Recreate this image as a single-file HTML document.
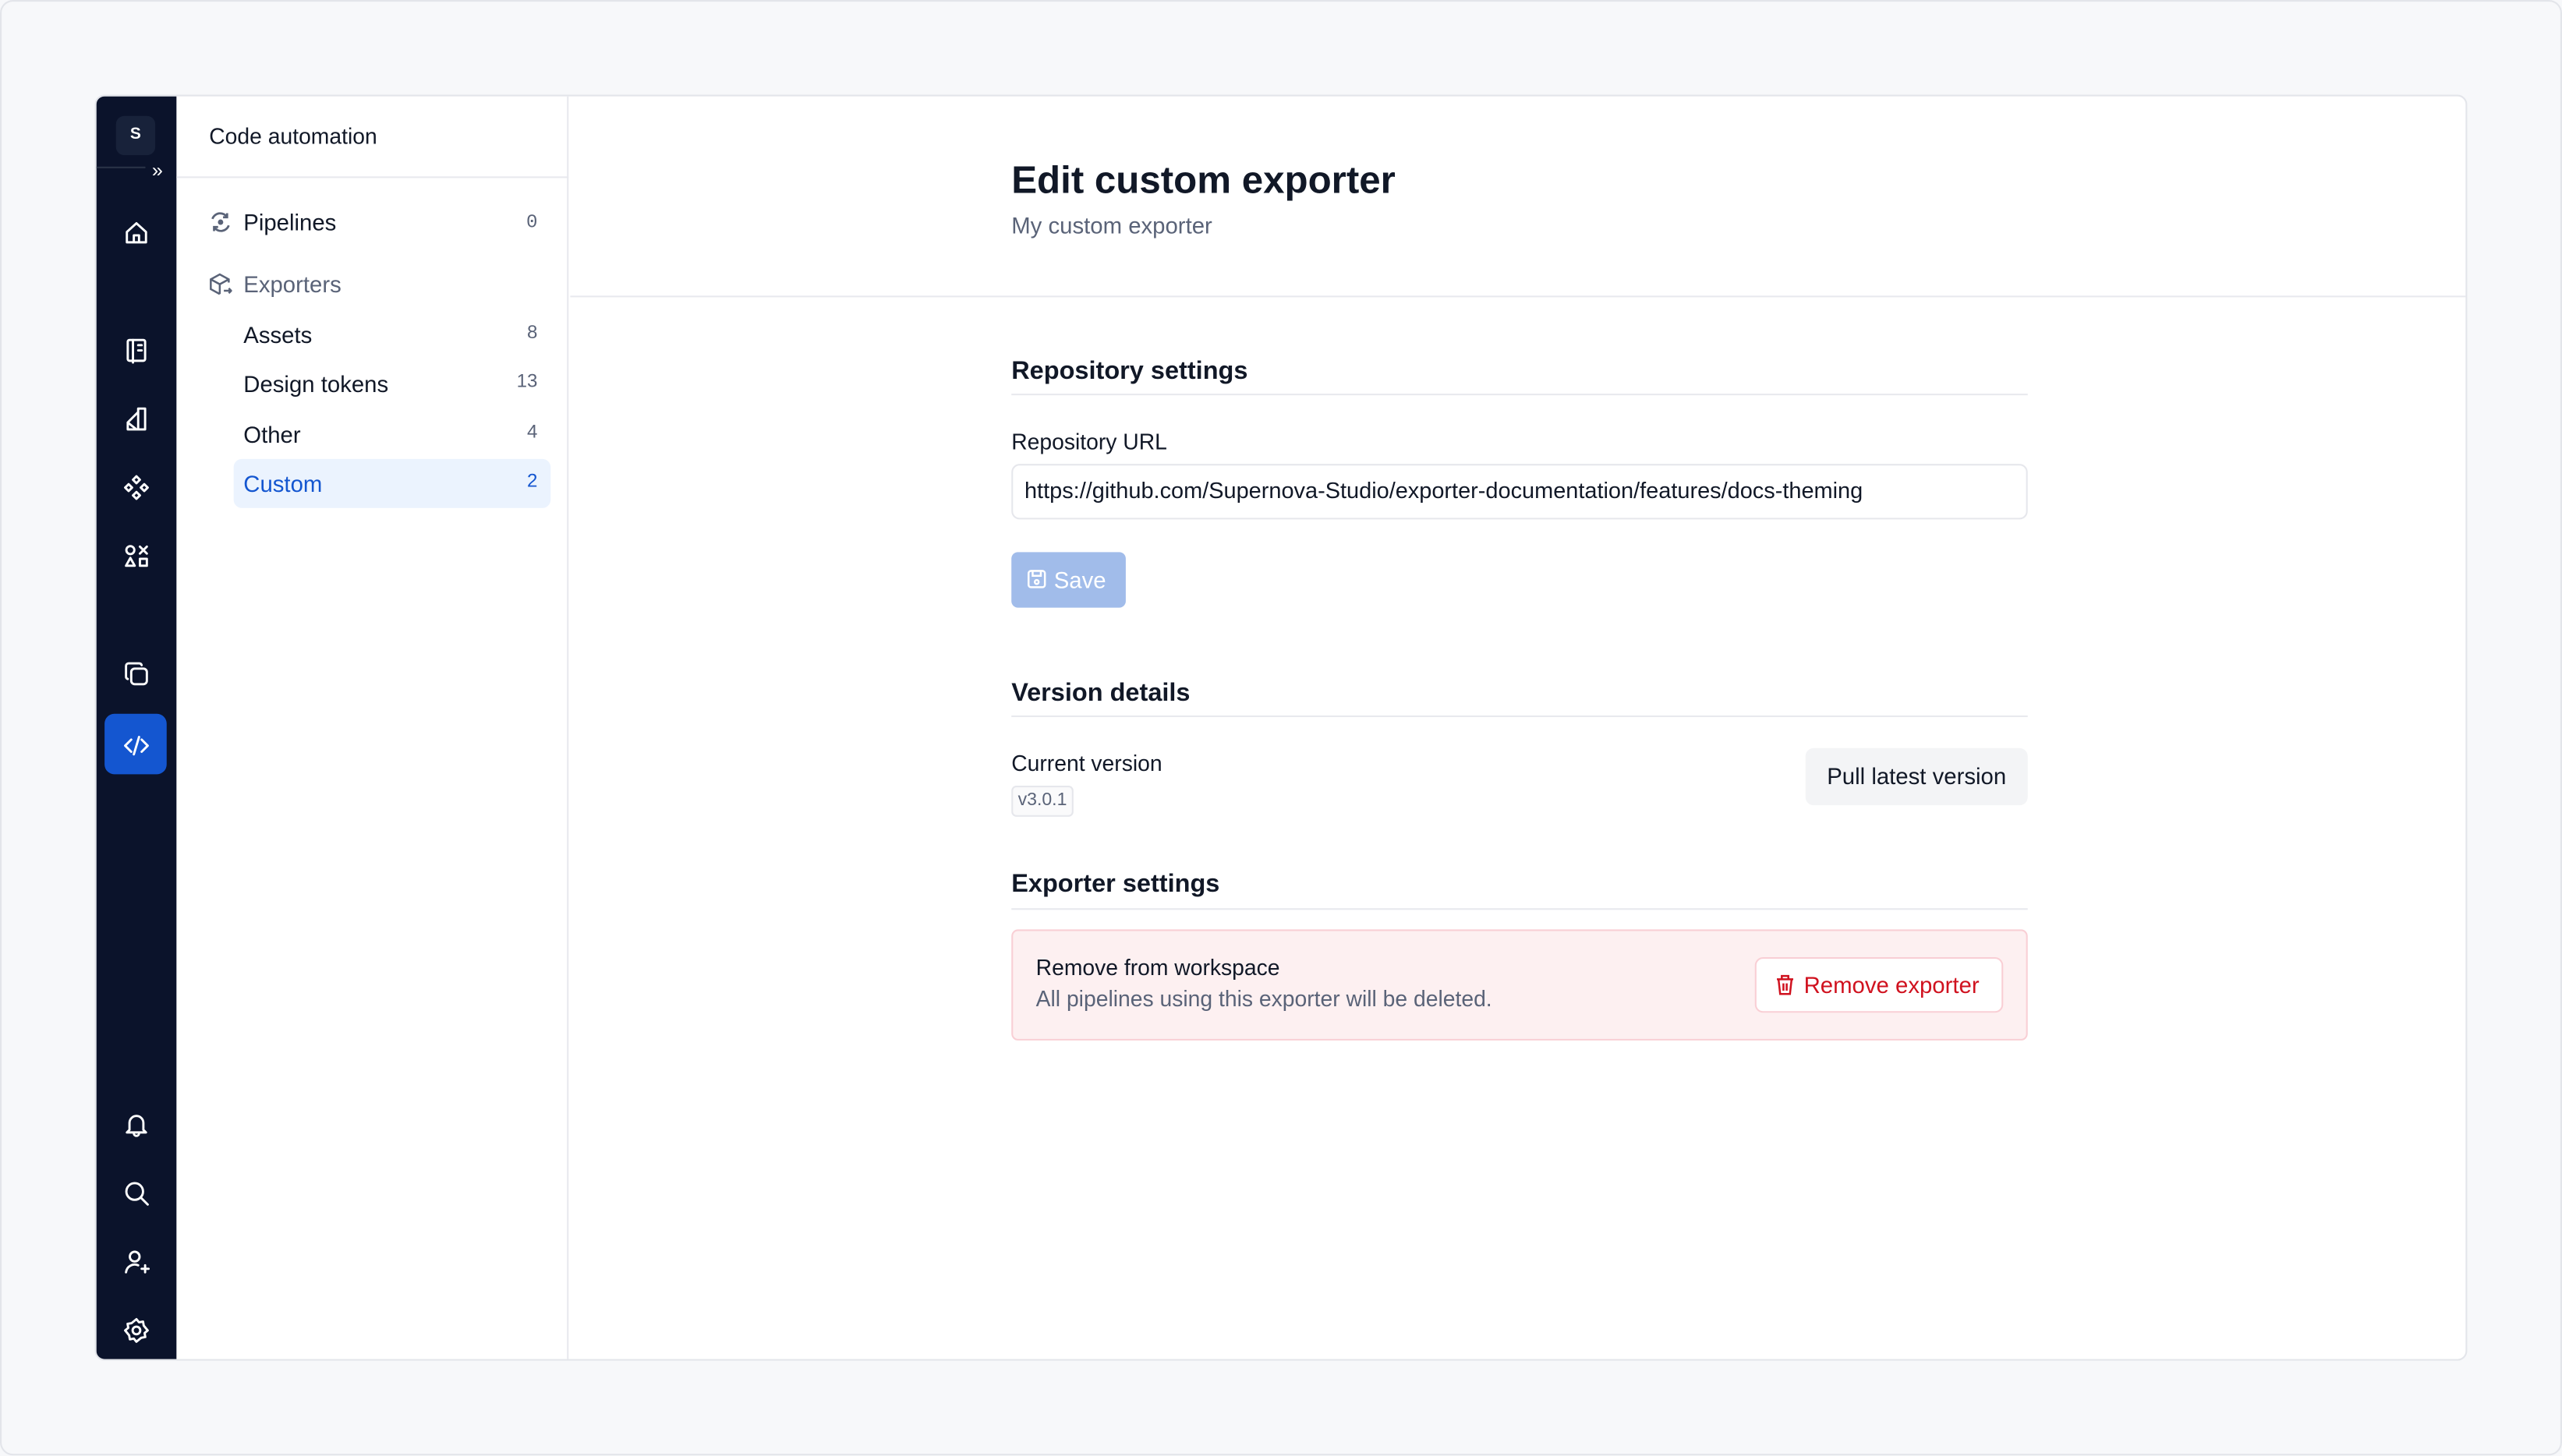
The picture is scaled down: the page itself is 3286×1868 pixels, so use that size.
<!DOCTYPE html>
<html><head><meta charset="utf-8"><style>
*{box-sizing:border-box;margin:0;padding:0}
html,body{width:3286px;height:1868px;overflow:hidden;background:#f7f8fa}
#s{position:absolute;left:0;top:0;width:1568px;height:891px;transform:scale(2.09566);transform-origin:0 0;font-family:"Liberation Sans",sans-serif;color:#111827;background:#f7f8fa;border:1px solid #e3e5ea;border-radius:8px}
.a{position:absolute}
#app{left:57px;top:57px;width:1452px;height:775px;background:#fff;border:1px solid #e3e5ea;border-radius:6px;overflow:hidden}
#nav{left:0;top:0;width:49px;height:775px;background:#0b132b}
#side{left:49px;top:0;width:240px;height:775px;border-right:1px solid #e8e9ee}
.ic{position:absolute;left:16px;width:17px;height:17px}
.ic svg{width:17px;height:17px;fill:none;stroke:#fff;stroke-width:1.3;stroke-linecap:round;stroke-linejoin:round}
.it{position:absolute;left:41px;font-size:14px;color:#111827}
.ct{position:absolute;right:18px;font-size:11.5px;color:#5a6378}
h2{position:absolute;font-size:15.5px;font-weight:bold;color:#111827}
.hr{position:absolute;left:559px;width:622px;height:1px;background:#e8e9ee}
</style></head><body><div id="s">
<div id="app" class="a">
 <div id="nav" class="a">
  <div class="a" style="left:12px;top:12px;width:24px;height:24px;border-radius:5px;background:#18223a;color:#fff;font-size:10px;font-weight:bold;text-align:center;line-height:24px">S</div>
  <div class="a" style="left:0;top:43px;width:30px;height:1px;background:#2a3347"></div>
  <div class="a" style="left:34px;top:39px;color:#fff;font-size:12px;line-height:12px">»</div>
  <div class="ic" style="top:75px"><svg viewBox="0 0 16 16"><path d="M2.5 7.5L8 2.5l5.5 5v6h-11z M6.5 13.5v-4h3v4"/></svg></div>
  <div class="ic" style="top:147px"><svg viewBox="0 0 16 16"><rect x="3" y="2" width="10" height="12" rx="1"/><path d="M6 2v13M9 5h2M9 8h2"/></svg></div>
  <div class="ic" style="top:189px"><svg viewBox="0 0 16 16"><path d="M9 2h4v12H3v-4l6-6z M9 4v10M3 10l5 4"/></svg></div>
  <div class="ic" style="top:231px"><svg viewBox="0 0 16 16"><path d="M8 1.5l2 2-2 2-2-2zM8 10.5l2 2-2 2-2-2zM3.5 6l2 2-2 2-2-2zM12.5 6l2 2-2 2-2-2z"/></svg></div>
  <div class="ic" style="top:273px"><svg viewBox="0 0 16 16"><circle cx="4.5" cy="4.5" r="2.3"/><path d="M10 2.5l4 4M14 2.5l-4 4M4.5 9l2.5 4.5H2zM10 9.5h4v4h-4z"/></svg></div>
  <div class="ic" style="top:345px"><svg viewBox="0 0 16 16"><rect x="5" y="5" width="9" height="9" rx="2"/><path d="M11 3a1.5 1.5 0 0 0-1.5-1H3.5A1.5 1.5 0 0 0 2 3.5v6A1.5 1.5 0 0 0 3 11"/></svg></div>
  <div class="a" style="left:5px;top:378px;width:38px;height:37px;border-radius:6px;background:#1456d0"></div>
  <div class="ic" style="top:389px"><svg viewBox="0 0 16 16"><path d="M5 4.5L1.5 8 5 11.5M11 4.5L14.5 8 11 11.5M9.5 3l-3 10"/></svg></div>
  <div class="ic" style="top:621px"><svg viewBox="0 0 16 16"><path d="M4 11V7a4 4 0 0 1 8 0v4l1.5 1.5h-11zM6.5 13a1.5 1.5 0 0 0 3 0"/></svg></div>
  <div class="ic" style="top:663px"><svg viewBox="0 0 16 16"><circle cx="7" cy="7" r="4.8"/><path d="M10.5 10.5l4 4"/></svg></div>
  <div class="ic" style="top:705px"><svg viewBox="0 0 16 16"><circle cx="7" cy="5" r="2.8"/><path d="M2 14a5 5 0 0 1 7-4M11 12h4M13 10v4"/></svg></div>
  <div class="ic" style="top:747px"><svg viewBox="0 0 16 16"><circle cx="8" cy="8" r="2.2"/><path d="M8 1.5l1.5 1.8 2.3-.4.4 2.3L14.5 8l-1.8 1.5.4 2.3-2.3.4L8 14.5l-1.5-1.8-2.3.4-.4-2.3L1.5 8l1.8-1.5-.4-2.3 2.3-.4z"/></svg></div>
 </div>
 <div id="side" class="a">
  <div class="a" style="left:20px;top:17px;font-size:13.5px">Code automation</div>
  <div class="a" style="left:0;top:49px;width:240px;height:1px;background:#e8e9ee"></div>
  <svg class="a" style="left:20px;top:70px;width:14px;height:14px;fill:none;stroke:#5a6378;stroke-width:1.3" viewBox="0 0 14 14"><path d="M2 5a5 5 0 0 1 9-1M12 9a5 5 0 0 1-9 1M11 1.5V4H8.5M3 12.5V10h2.5"/><circle cx="7" cy="7" r="1" fill="#5a6378"/></svg>
  <div class="it" style="top:69px">Pipelines</div><div class="ct" style="top:71px;font-family:'Liberation Mono',monospace">0</div>
  <svg class="a" style="left:20px;top:108px;width:14px;height:14px;fill:none;stroke:#5a6378;stroke-width:1.2" viewBox="0 0 14 14"><path d="M12 6V4L6.5 1 1 4v6l5.5 3M1 4l5.5 3L12 4M6.5 7v6M9 11h4.5M12 9.5l1.5 1.5-1.5 1.5"/></svg>
  <div class="it" style="top:107px;color:#5a6378">Exporters</div>
  <div class="it" style="top:138px">Assets</div><div class="ct" style="top:139px">8</div>
  <div class="it" style="top:168px">Design tokens</div><div class="ct" style="top:169px">13</div>
  <div class="it" style="top:199px">Other</div><div class="ct" style="top:200px">4</div>
  <div class="a" style="left:35px;top:222px;width:194px;height:30px;border-radius:5px;background:#ebf3fe"></div>
  <div class="it" style="top:229px;color:#1456d0">Custom</div><div class="ct" style="top:230px;color:#1456d0">2</div>
 </div>
 <div class="a" style="left:290px;top:122px;width:1162px;height:1px;background:#e8e9ee"></div>
 <div class="a" style="left:560px;top:38px;font-size:23.5px;font-weight:bold">Edit custom exporter</div>
 <div class="a" style="left:560px;top:71px;font-size:14px;color:#5a6378">My custom exporter</div>
 <h2 style="left:560px;top:160px">Repository settings</h2>
 <div class="hr" style="left:560px;top:182px"></div>
 <div class="a" style="left:560px;top:204px;font-size:13.5px">Repository URL</div>
 <div class="a" style="left:560px;top:225px;width:622px;height:34px;border:1px solid #e6e7ec;border-radius:5px;padding-left:7px;line-height:32px;font-size:13.8px;white-space:nowrap">https://github.com/Supernova-Studio/exporter-documentation/features/docs-theming</div>
 <div class="a" style="left:560px;top:279px;width:70px;height:34px;border-radius:4px;background:#a1bcea;color:#fff;font-size:14px;line-height:34px;padding-left:26px">Save</div>
 <svg class="a" style="left:569px;top:289px;width:13px;height:13px;fill:none;stroke:#fff;stroke-width:1.2" viewBox="0 0 13 13"><rect x="1.5" y="1.5" width="10" height="10" rx="1.5"/><path d="M4 1.5v3h5v-3"/><circle cx="6.5" cy="8.3" r="1.2"/></svg>
 <h2 style="left:560px;top:357px">Version details</h2>
 <div class="hr" style="left:560px;top:379px"></div>
 <div class="a" style="left:560px;top:401px;font-size:13.5px">Current version</div>
 <div class="a" style="left:560px;top:422px;height:19px;padding:0 3px;border:1px solid #e6e7ec;border-radius:3px;font-size:11px;line-height:17px;color:#5a6378;background:#fafafb">v3.0.1</div>
 <div class="a" style="left:1046px;top:399px;width:136px;height:35px;border-radius:5px;background:#f3f4f6;font-size:14px;line-height:35px;text-align:center">Pull latest version</div>
 <h2 style="left:560px;top:474px">Exporter settings</h2>
 <div class="hr" style="left:560px;top:497px"></div>
 <div class="a" style="left:560px;top:510px;width:622px;height:68px;border:1px solid #f9cfd5;border-radius:4px;background:#fdf0f1"></div>
 <div class="a" style="left:575px;top:526px;font-size:13.5px">Remove from workspace</div>
 <div class="a" style="left:575px;top:545px;font-size:13.5px;color:#5a6378">All pipelines using this exporter will be deleted.</div>
 <div class="a" style="left:1015px;top:527px;width:152px;height:34px;border:1px solid #f9cfd5;border-radius:5px;background:#fff;color:#d0121f;font-size:14px;line-height:32px;padding-left:29px">Remove exporter</div>
 <svg class="a" style="left:1027px;top:537px;width:13px;height:14px;fill:none;stroke:#d0121f;stroke-width:1.2" viewBox="0 0 13 14"><path d="M1.5 3.5h10M4.5 3.5V1.5h4v2M2.5 3.5l1 9h6l1-9M5.5 6v4.5M7.5 6v4.5"/></svg>
</div>
</div></body></html>
